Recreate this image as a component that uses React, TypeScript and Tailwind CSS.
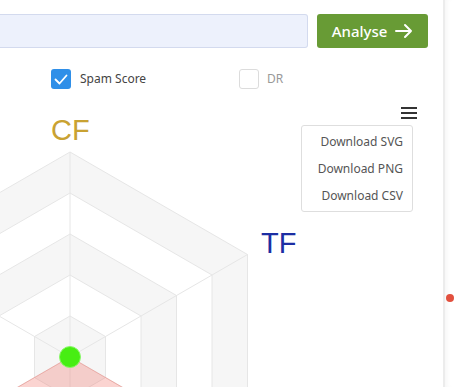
const cx = 70;
const cy = 357;
const levels = [205, 164, 123, 82, 41];

function hexPoints(r: number) {
  const pts: string[] = [];
  for (let i = 0; i < 6; i++) {
    const a = ((-90 + i * 60) * Math.PI) / 180;
    pts.push(`${(cx + r * Math.cos(a)).toFixed(1)},${(cy + r * Math.sin(a)).toFixed(1)}`);
  }
  return pts.join(" ");
}

function spokes() {
  const out: { x: number; y: number }[] = [];
  for (let i = 0; i < 6; i++) {
    const a = ((-90 + i * 60) * Math.PI) / 180;
    out.push({ x: cx + 205 * Math.cos(a), y: cy + 205 * Math.sin(a) });
  }
  return out;
}

function RadarChart() {
  const far = 120;
  const lr = { x: cx + far * 0.866, y: cy + far * 0.5 };
  const bt = { x: cx, y: cy + far };
  const ll = { x: cx - far * 0.866, y: cy + far * 0.5 };

  return (
    <svg width="443" height="298" viewBox="0 89 443 298" className="block">
      {levels.map((r, i) => (
        <polygon
          key={r}
          points={hexPoints(r)}
          fill={i % 2 === 0 ? "#f6f6f6" : "#ffffff"}
          stroke="#e6e6e6"
          strokeWidth="1"
        />
      ))}
      {spokes().map((p, i) => (
        <line key={i} x1={cx} y1={cy} x2={p.x} y2={p.y} stroke="#e6e6e6" strokeWidth="1" />
      ))}
      <polygon
        points={`${cx},${cy} ${lr.x},${lr.y} ${bt.x},${bt.y} ${ll.x},${ll.y}`}
        fill="rgba(239,100,90,0.28)"
        stroke="rgba(239,100,90,0.35)"
        strokeWidth="1"
      />
      <circle cx={cx} cy={cy} r="10.5" fill="#47ee12" stroke="#8af76a" strokeWidth="1" />
      <text x="51" y="140" fontFamily="'Liberation Sans', Arial, sans-serif" fontSize="29" fill="#c9a232">
        CF
      </text>
      <text x="261" y="253" fontFamily="'Liberation Sans', Arial, sans-serif" fontSize="29" fill="#1c2ea3">
        TF
      </text>
    </svg>
  );
}

export default function App() {
  return (
    <div className="flex w-[474px] h-[387px] overflow-hidden bg-white" style={{ fontFamily: "'Noto Sans', 'Open Sans', sans-serif" }}>
      <div className="relative w-[443px] shrink-0">
        <div className="flex pt-[14px]">
          <div className="w-[308px] h-[34px] bg-[#edf1fc] border border-l-0 border-[#d3daee] rounded-r-[3px]" />
          <button className="ml-[9px] w-[111px] h-[34px] rounded-[3px] bg-[#689b35] text-white text-[15px] font-medium flex items-center justify-center gap-[8px]">
            <span>Analyse</span>
            <svg width="18" height="16" viewBox="0 0 18 16" fill="none" stroke="white" strokeWidth="2" strokeLinecap="round" strokeLinejoin="round">
              <path d="M1 8h15M10 2l6 6-6 6" />
            </svg>
          </button>
        </div>

        <div className="flex items-center h-[20px] mt-[21px] pl-[51px]">
          <div className="flex items-center w-[188px]">
            <span className="w-[20px] h-[20px] rounded-[3px] bg-[#2f8fe8] flex items-center justify-center">
              <svg width="14" height="11" viewBox="0 0 14 11" fill="none" stroke="white" strokeWidth="1.8" strokeLinecap="round" strokeLinejoin="round">
                <path d="M1.5 5.5l4 4 7-8" />
              </svg>
            </span>
            <span className="ml-[9px] text-[12px] text-[#444]">Spam Score</span>
          </div>
          <div className="flex items-center">
            <span className="w-[20px] h-[20px] rounded-[3px] border border-[#dcdcdc] bg-white" />
            <span className="ml-[8px] text-[12px] text-[#999]">DR</span>
          </div>
        </div>

        <RadarChart />

        <div className="absolute left-[401px] top-[107px] flex flex-col gap-[3px]">
          <span className="block w-[16px] h-[2px] bg-[#333]" />
          <span className="block w-[16px] h-[2px] bg-[#333]" />
          <span className="block w-[16px] h-[2px] bg-[#333]" />
        </div>

        <div className="absolute left-[301px] top-[125px] w-[112px] h-[87px] bg-white border border-[#dedede] rounded-[3px] flex flex-col items-end justify-center gap-[8px] pr-[9px] text-[12px] text-[#555]">
          <span className="leading-[19px]">Download SVG</span>
          <span className="leading-[19px]">Download PNG</span>
          <span className="leading-[19px]">Download CSV</span>
        </div>
      </div>

      <div className="flex-1 border-l-2 border-[#ececec] shadow-[inset_5px_0_5px_-3px_rgba(0,0,0,0.04)] pt-[294px] pl-[1px]">
        <span className="block w-[8px] h-[8px] rounded-full bg-[#e2503e]" />
      </div>
    </div>
  );
}
